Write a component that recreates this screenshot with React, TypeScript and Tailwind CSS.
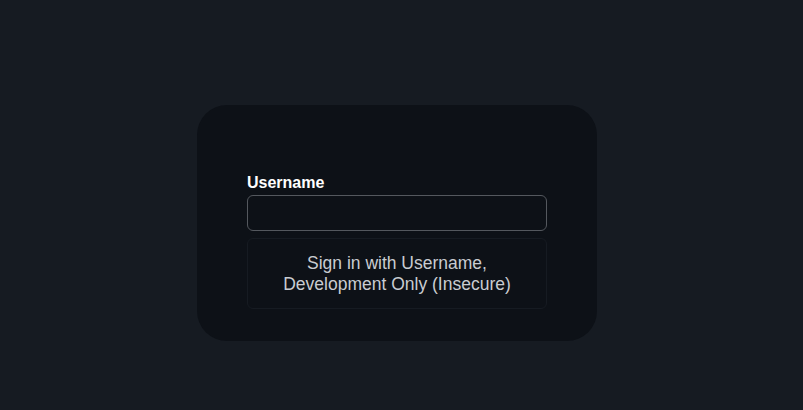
import { useState } from 'react';

export default function App() {
  const [username, setUsername] = useState('');

  return (
    <div className="min-h-[410px] w-full bg-[#161b22] pt-[105px] font-['Liberation_Sans',Arial,sans-serif]">
      <div className="flex justify-center pr-[9px]">
        <form
          onSubmit={(e) => e.preventDefault()}
          className="w-[400px] h-[236px] rounded-[30px] bg-[#0d1117] px-[50px] pt-[68px]"
        >
          <label htmlFor="username" className="block text-[16px] leading-[20px] font-bold text-white">
            Username
          </label>
          <input
            id="username"
            type="text"
            value={username}
            onChange={(e) => setUsername(e.target.value)}
            className="mt-[2px] block w-full h-[36px] rounded-[6px] border border-[#54585e] bg-[#0d1117] px-3 text-white text-[15px] focus:outline-none"
          />
          <button
            type="submit"
            className="mt-[7px] flex w-full h-[71px] items-center justify-center rounded-[6px] border border-[#161b22] bg-[#0d1117] px-4 text-center text-[17.5px] leading-[21px] text-[#c9ccd1]"
          >
            Sign in with Username,
            <br />
            Development Only (Insecure)
          </button>
        </form>
      </div>
    </div>
  );
}
